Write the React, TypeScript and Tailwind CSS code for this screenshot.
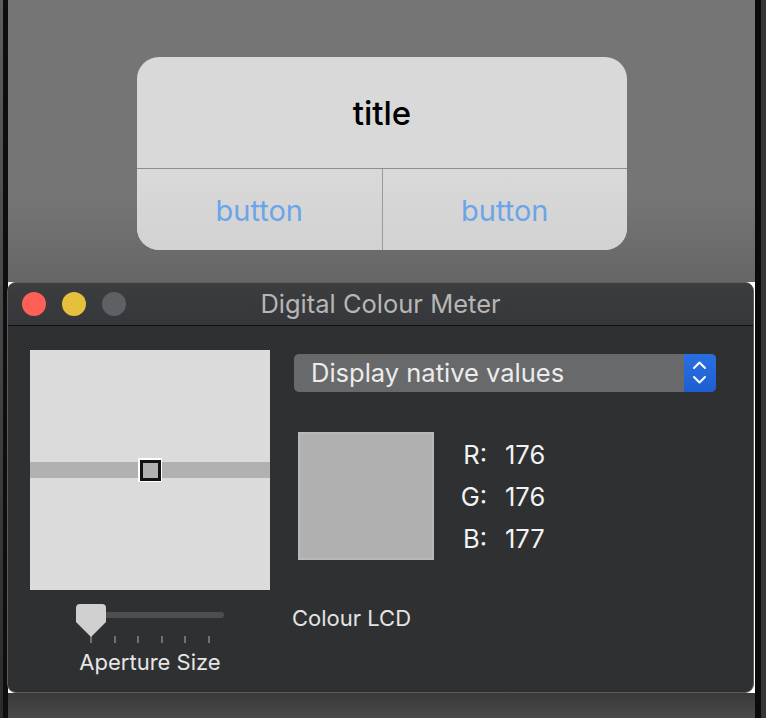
export default function App() {
  const ticks = [61, 85, 108, 132, 155, 179];
  return (
    <div className="w-[766px] h-[718px] flex overflow-hidden font-['Inter',sans-serif]">
      <div className="w-[3px] bg-linear-to-b from-[#5e5e5e] to-[#2b2b2b]" />
      <div className="w-[5px] bg-[#0e0e0e]" />
      <div className="w-[747px] flex flex-col">
        <div className="h-[282px] bg-linear-to-b from-[#757575] from-70% to-[#666666] pt-[57px] pl-[129px]">
          <div className="w-[490px] h-[193px] rounded-[22px] bg-[#d9d9d9] flex flex-col overflow-hidden">
            <div className="h-[111px] flex items-center justify-center pt-[3px] text-[33px] font-medium text-black">
              title
            </div>
            <div className="h-px bg-[#8e8e8e]" />
            <div className="flex-1 flex bg-linear-to-b from-[#d9d9d9] to-[#d2d2d2]">
              <div className="flex-1 flex items-center justify-center pt-[3px] text-[29px] text-[#6ba5e9]">
                button
              </div>
              <div className="w-px bg-[#9a9a9a]" />
              <div className="flex-1 flex items-center justify-center pt-[3px] text-[29px] text-[#6ba5e9]">
                button
              </div>
            </div>
          </div>
        </div>

        <div className="-ml-px w-[747px] h-[411px] rounded-[9px] border border-[#5c5c5c] bg-[#2f3032] flex flex-col overflow-hidden">
          <div className="h-[43px] border-b border-[#111111] bg-linear-to-b from-[#3c3d3f] to-[#36373a] grid grid-cols-[1fr_auto_1fr] items-center">
            <div className="flex items-center gap-4 pl-[14px]">
              <div className="w-6 h-6 rounded-full bg-[#fe5f57]" />
              <div className="w-6 h-6 rounded-full bg-[#e6c03d]" />
              <div className="w-6 h-6 rounded-full bg-[#5f6063]" />
            </div>
            <div className="text-[25.5px] text-[#b6b6b6] leading-none">Digital Colour Meter</div>
            <div />
          </div>

          <div className="flex-1 flex pl-[22px] pt-[24px] gap-[24px]">
            <div className="w-[240px] flex flex-col">
              <div className="w-[240px] h-[240px] bg-[#dbdbdb] flex flex-col">
                <div className="h-[112px]" />
                <div className="h-[16px] bg-[#b1b1b1] flex items-center justify-center">
                  <div className="w-[24px] h-[24px] shrink-0 bg-white flex items-center justify-center">
                    <div className="w-[21px] h-[21px] border-[3px] border-[#111111] bg-[#b0b0b0]" />
                  </div>
                </div>
              </div>
              <svg className="mt-[10px]" width="240" height="46" viewBox="0 0 240 46">
                <rect x="60" y="12" width="134" height="6" rx="3" fill="#4d4e50" />
                {ticks.map((x) => (
                  <line key={x} x1={x} y1="36" x2={x} y2="43" stroke="#86878a" strokeWidth="1.5" />
                ))}
                <path d="M50 4 H72 Q76 4 76 8 V22 L61 37 L46 22 V8 Q46 4 50 4 Z" fill="#d0d0d0" />
              </svg>
              <div className="mt-[3px] text-[22px] leading-[26px] text-center text-[#e6e6e6]">
                Aperture Size
              </div>
            </div>

            <div className="flex flex-col pt-[4px]">
              <div className="w-[422px] h-[38px] rounded-[5px] bg-[#68696b] flex overflow-hidden">
                <div className="flex-1 flex items-center pl-[17px] text-[25.5px] text-[#ececec]">
                  Display native values
                </div>
                <div className="w-[32px] bg-linear-to-b from-[#2a6fe0] to-[#1d5fd0]">
                  <svg width="32" height="38" viewBox="0 0 32 38">
                    <path d="M10 14 L15.5 8.5 L21 14" fill="none" stroke="white" strokeWidth="2" strokeLinecap="round" strokeLinejoin="round" />
                    <path d="M10 23 L15.5 28.5 L21 23" fill="none" stroke="white" strokeWidth="2" strokeLinecap="round" strokeLinejoin="round" />
                  </svg>
                </div>
              </div>

              <div className="mt-[40px] flex">
                <div className="ml-[4px] w-[136px] h-[128px] bg-[#b0b0b0] border-2 border-[#b9b9b9]" />
                <div className="ml-[24px] pt-[2px] grid grid-cols-[29px_auto] gap-x-[18px] text-[25.5px] text-[#f2f2f2]">
                  <div className="h-[42px] flex items-center justify-end">R:</div>
                  <div className="h-[42px] flex items-center">176</div>
                  <div className="h-[42px] flex items-center justify-end">G:</div>
                  <div className="h-[42px] flex items-center">176</div>
                  <div className="h-[42px] flex items-center justify-end">B:</div>
                  <div className="h-[42px] flex items-center">177</div>
                </div>
              </div>

              <div className="mt-[45px] -ml-[2px] text-[22px] leading-[26px] text-[#e4e4e4]">
                Colour LCD
              </div>
            </div>
          </div>
        </div>

        <div className="flex-1 bg-linear-to-b from-[#393939] to-[#4a4a4a]" />
      </div>
      <div className="w-[6px] bg-[#0b0b0b]" />
      <div className="w-[5px] bg-[#363636]" />
    </div>
  );
}
